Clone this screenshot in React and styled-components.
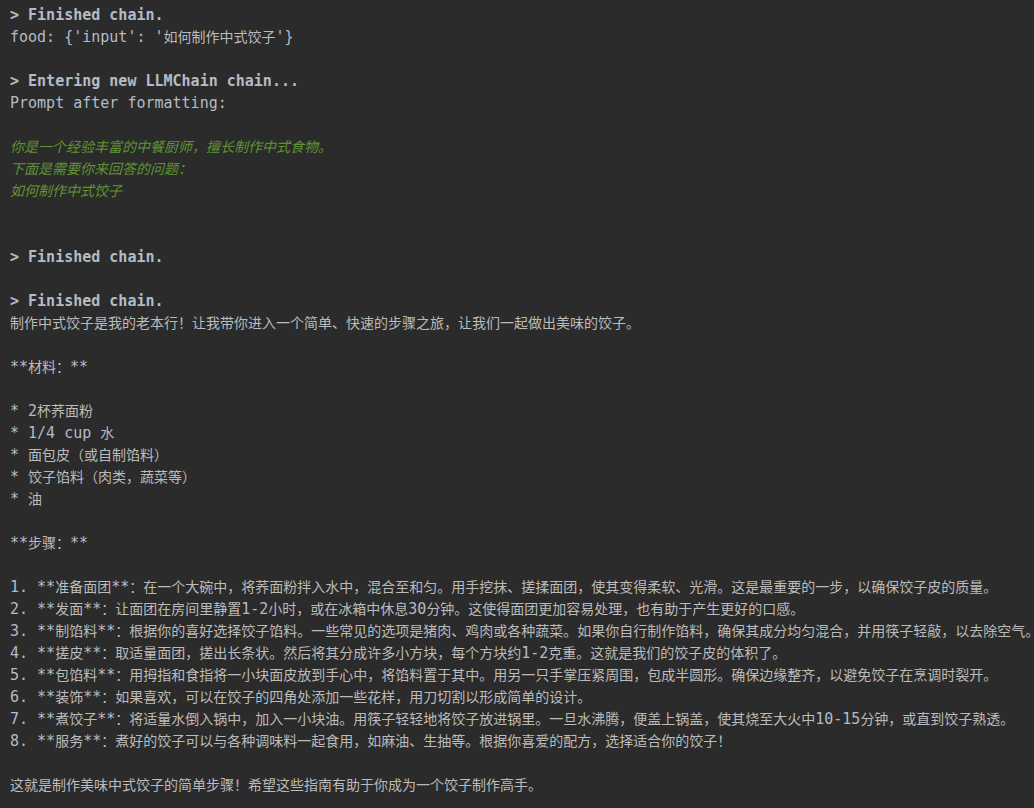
import styled, { createGlobalStyle } from "styled-components";

const GlobalStyle = createGlobalStyle`
  html, body {
    margin: 0;
    padding: 0;
    background: #2b2b2b;
    overflow: hidden;
  }
`;

const Console = styled.div`
  width: 1034px;
  height: 808px;
  box-sizing: border-box;
  padding: 3px 0 0 10px;
  background: #2b2b2b;
  color: #bbbbbb;
  font-family: "Noto Sans CJK SC", "DejaVu Sans Mono", monospace;
  font-size: 14px;
  overflow: hidden;
`;

const Line = styled.div`
  height: 22px;
  line-height: 22px;
  white-space: pre;
  color: ${(p) => (p.$kind === "green" ? "#5f9431" : "#bbbbbb")};
  font-style: ${(p) => (p.$kind === "green" ? "italic" : "normal")};
  font-weight: ${(p) => (p.$kind === "bold" ? 700 : 400)};
`;

const Mono = styled.span`
  font-family: "DejaVu Sans Mono", "Liberation Mono", monospace;
  font-size: 15px;
  color: ${(p) => (p.$kind === "green" ? "#5f9431" : "#b3bcc6")};
`;

const Cjk = styled.span`
  font-family: "Noto Sans CJK SC", sans-serif;
  font-size: 14px;
`;

const lines = [
  ["bold", "> Finished chain."],
  ["", "food: {'input': '如何制作中式饺子'}"],
  ["", ""],
  ["bold", "> Entering new LLMChain chain..."],
  ["", "Prompt after formatting:"],
  ["", ""],
  ["green", "你是一个经验丰富的中餐厨师，擅长制作中式食物。"],
  ["green", "下面是需要你来回答的问题："],
  ["green", "如何制作中式饺子"],
  ["", ""],
  ["", ""],
  ["bold", "> Finished chain."],
  ["", ""],
  ["bold", "> Finished chain."],
  ["", "制作中式饺子是我的老本行！让我带你进入一个简单、快速的步骤之旅，让我们一起做出美味的饺子。"],
  ["", ""],
  ["", "**材料：**"],
  ["", ""],
  ["", "* 2杯荞面粉"],
  ["", "* 1/4 cup 水"],
  ["", "* 面包皮（或自制馅料）"],
  ["", "* 饺子馅料（肉类，蔬菜等）"],
  ["", "* 油"],
  ["", ""],
  ["", "**步骤：**"],
  ["", ""],
  ["", "1. **准备面团**：在一个大碗中，将荞面粉拌入水中，混合至和匀。用手挖抹、搓揉面团，使其变得柔软、光滑。这是最重要的一步，以确保饺子皮的质量。"],
  ["", "2. **发面**：让面团在房间里静置1-2小时，或在冰箱中休息30分钟。这使得面团更加容易处理，也有助于产生更好的口感。"],
  ["", "3. **制馅料**：根据你的喜好选择饺子馅料。一些常见的选项是猪肉、鸡肉或各种蔬菜。如果你自行制作馅料，确保其成分均匀混合，并用筷子轻敲，以去除空气。"],
  ["", "4. **搓皮**：取适量面团，搓出长条状。然后将其分成许多小方块，每个方块约1-2克重。这就是我们的饺子皮的体积了。"],
  ["", "5. **包馅料**：用拇指和食指将一小块面皮放到手心中，将馅料置于其中。用另一只手掌压紧周围，包成半圆形。确保边缘整齐，以避免饺子在烹调时裂开。"],
  ["", "6. **装饰**：如果喜欢，可以在饺子的四角处添加一些花样，用刀切割以形成简单的设计。"],
  ["", "7. **煮饺子**：将适量水倒入锅中，加入一小块油。用筷子轻轻地将饺子放进锅里。一旦水沸腾，便盖上锅盖，使其烧至大火中10-15分钟，或直到饺子熟透。"],
  ["", "8. **服务**：煮好的饺子可以与各种调味料一起食用，如麻油、生抽等。根据你喜爱的配方，选择适合你的饺子！"],
  ["", ""],
  ["", "这就是制作美味中式饺子的简单步骤！希望这些指南有助于你成为一个饺子制作高手。"],
];

// ascii runs use the mono font, the rest falls to the CJK font
const renderRuns = (text, kind) =>
  (text.match(/[\x00-\x7f]+|[^\x00-\x7f]+/g) || []).map((run, i) =>
    /^[\x00-\x7f]/.test(run) ? (
      <Mono key={i} $kind={kind}>
        {run}
      </Mono>
    ) : (
      <Cjk key={i}>{run}</Cjk>
    )
  );

export default function App() {
  return (
    <>
      <GlobalStyle />
      <Console>
        {lines.map(([kind, text], i) => (
          <Line key={i} $kind={kind}>
            {renderRuns(text, kind)}
          </Line>
        ))}
      </Console>
    </>
  );
}
